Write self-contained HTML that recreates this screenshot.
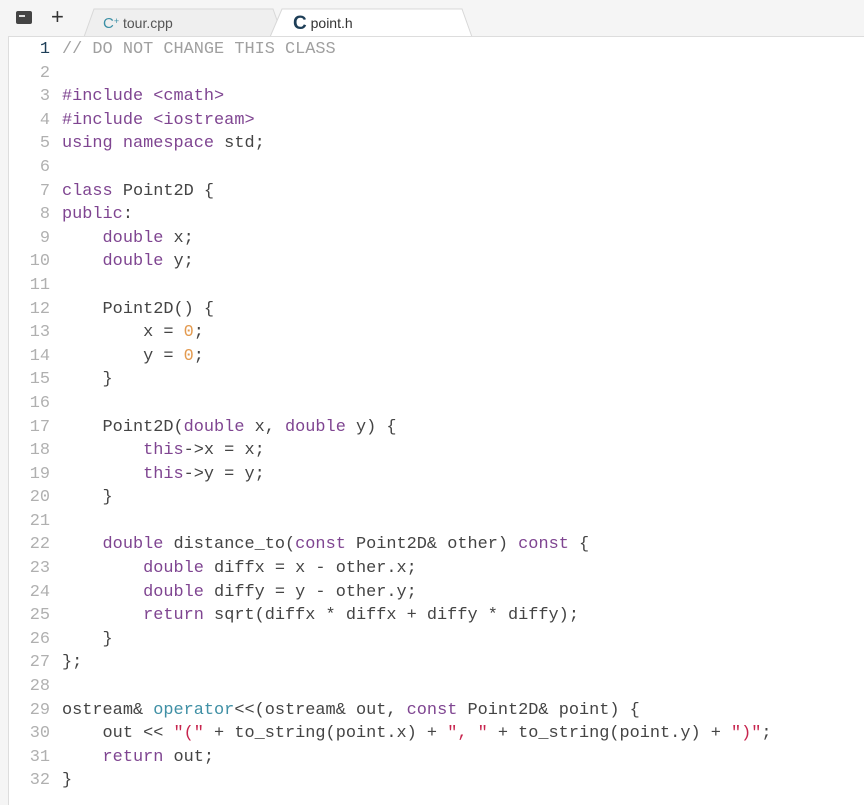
<!DOCTYPE html>
<html><head><meta charset="utf-8"><style>
html,body{margin:0;padding:0;width:864px;height:804px;overflow:hidden;background:#f5f5f5;font-family:"Liberation Sans",sans-serif}
.bar{position:absolute;left:0;top:0;width:864px;height:37px;background:#f5f5f5}
.ed{position:absolute;left:8px;top:36px;width:856px;height:768px;background:#fff;border-left:1px solid #ddd;border-top:1px solid #ddd}
.tab{position:absolute;top:8px;height:28px;font-size:14px;color:#555;line-height:30px}
pre{position:absolute;margin:0;font-family:"Liberation Mono",monospace;font-size:16.9px;line-height:23.6px;color:#444;top:38px}
.ln{left:0;width:50px;text-align:right;color:#b0b0b0}
.code{left:62px}
.k{color:#7f4591}.s{color:#c7254e}.n{color:#e39a4f}.o{color:#4090a5}.c{color:#a0a0a0}
</style></head><body>
<div class="bar">
<div style="position:absolute;left:16px;top:11px;width:16px;height:13px;background:#444;border-radius:2px"></div>
<div style="position:absolute;left:19px;top:15px;width:6px;height:1.5px;background:#ddd"></div>
<div style="position:absolute;left:51px;top:4px;font-size:22px;color:#333">+</div>
<svg style="position:absolute;left:80px;top:8px" width="400" height="30">
<path d="M4 29 L14 1 L193 1 L203 29" fill="#efefef" stroke="#d8d8d8"/>
<path d="M190 29 L202 1 L382 1 L392 29" fill="#fff" stroke="#d8d8d8"/>
</svg>
<div class="tab" style="left:103px"><span style="color:#3b8fa5;font-size:15px">C</span><span style="color:#3b8fa5;font-size:9px;vertical-align:top;position:relative;top:-2px">+</span> tour.cpp</div>
<div class="tab" style="left:293px;color:#333"><b style="color:#1d3e57;font-size:19px;vertical-align:-1px">C</b> point.h</div>
</div>
<div class="ed"></div>
<pre class="ln"><span style="color:#1d3e57">1</span>
2
3
4
5
6
7
8
9
10
11
12
13
14
15
16
17
18
19
20
21
22
23
24
25
26
27
28
29
30
31
32</pre>
<pre class="code"><span class="c">// DO NOT CHANGE THIS CLASS</span>

<span class="k">#include &lt;cmath&gt;</span>
<span class="k">#include &lt;iostream&gt;</span>
<span class="k">using namespace</span> std;

<span class="k">class</span> Point2D {
<span class="k">public</span>:
    <span class="k">double</span> x;
    <span class="k">double</span> y;

    Point2D() {
        x = <span class="n">0</span>;
        y = <span class="n">0</span>;
    }

    Point2D(<span class="k">double</span> x, <span class="k">double</span> y) {
        <span class="k">this</span>-&gt;x = x;
        <span class="k">this</span>-&gt;y = y;
    }

    <span class="k">double</span> distance_to(<span class="k">const</span> Point2D&amp; other) <span class="k">const</span> {
        <span class="k">double</span> diffx = x - other.x;
        <span class="k">double</span> diffy = y - other.y;
        <span class="k">return</span> sqrt(diffx * diffx + diffy * diffy);
    }
};

ostream&amp; <span class="o">operator</span>&lt;&lt;(ostream&amp; out, <span class="k">const</span> Point2D&amp; point) {
    out &lt;&lt; <span class="s">"("</span> + to_string(point.x) + <span class="s">", "</span> + to_string(point.y) + <span class="s">")"</span>;
    <span class="k">return</span> out;
}</pre>
</body></html>
